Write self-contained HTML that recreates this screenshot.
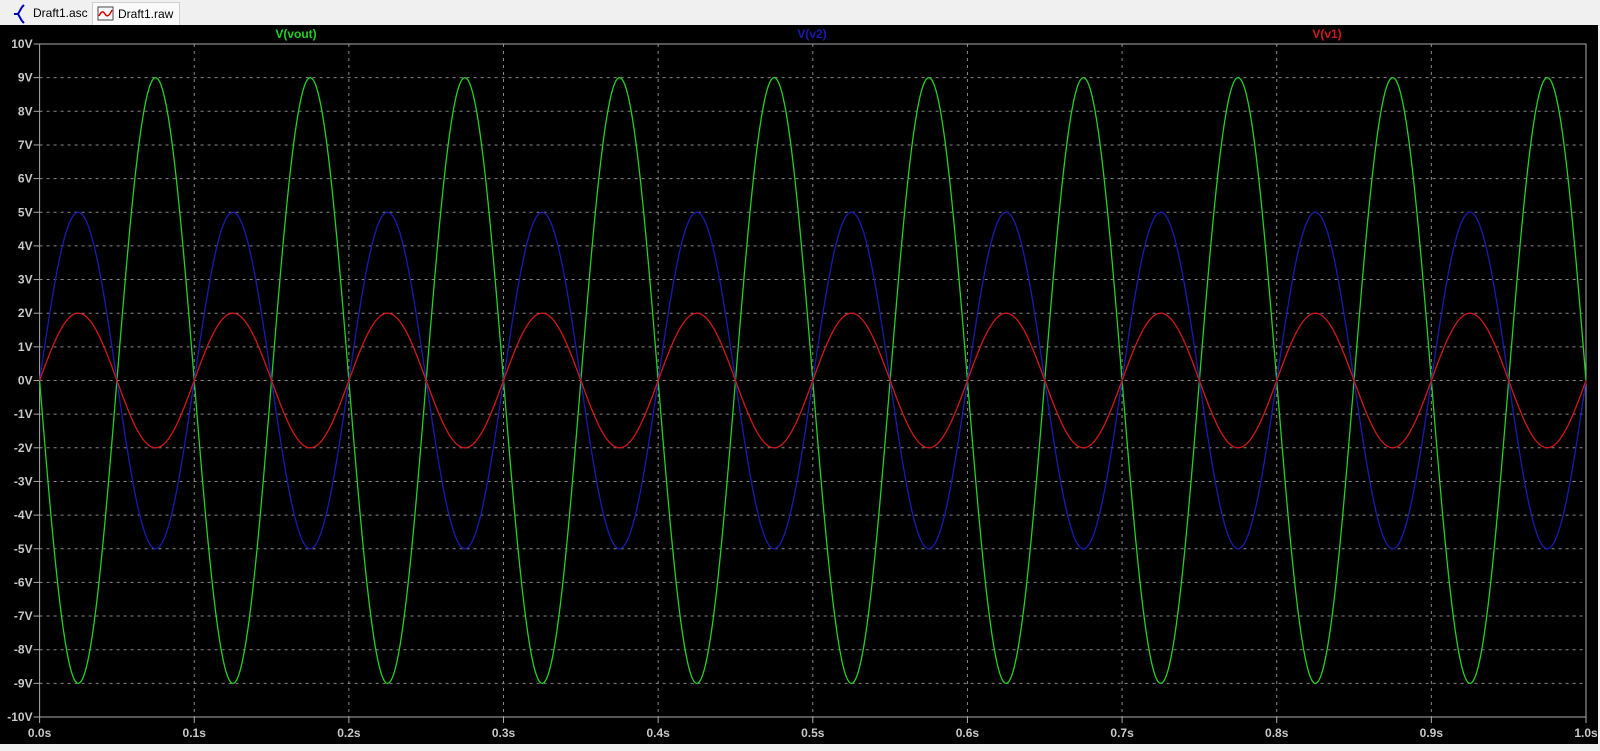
<!DOCTYPE html>
<html><head><meta charset="utf-8"><style>
html,body{margin:0;padding:0;width:1600px;height:751px;overflow:hidden;background:#f0f0f0;font-family:"Liberation Sans",sans-serif}
#tabs{position:absolute;left:0;top:0;width:1600px;height:25px;background:#f0f0f0;border-bottom:1px solid #d8d8d8}
.tab{position:absolute;top:2px;height:22px;font-size:12px;line-height:22px;color:#000}
#plot{position:absolute;left:0;top:25px;width:1598px;height:719px;background:#000}
svg text{font-family:"Liberation Sans",sans-serif;font-weight:bold;font-size:12px}
</style></head><body>
<div id="tabs">
<div class="tab" style="left:4px;width:86px;background:#f0f0f0">
<svg width="20" height="20" style="position:absolute;left:8px;top:2px"><path d="M10 3 L6 10 L10 17 M6 10 L2 10 M10 3 l2 -2 M10 17 l2 2" stroke="#0000c0" stroke-width="2" fill="none"/></svg>
<span style="position:absolute;left:29px">Draft1.asc</span></div>
<div class="tab" style="left:92px;width:86px;background:#fafafa;border:1px solid #d0d0d0;border-bottom:none">
<svg width="18" height="16" style="position:absolute;left:4px;top:3px"><rect x="1" y="1" width="15" height="13" fill="#fff" stroke="#444"/><path d="M2 10 Q5 3 8 8 T15 4" stroke="#d00" stroke-width="1.5" fill="none"/><path d="M1 14 h15" stroke="#444" stroke-dasharray="1 1"/></svg>
<span style="position:absolute;left:25px">Draft1.raw</span></div>
</div>
<div id="plot"></div>
<svg id="s" width="1600" height="751" style="position:absolute;left:0;top:0"></svg>
<script>
var L=39.6,R=1586,T=44,B=717,H='';
function y(v){return T+(10-v)*(B-T)/20}
function x(t){return L+t*(R-L)}
for(var v=-9;v<=9;v++){H+='<line x1="'+L+'" x2="'+R+'" y1="'+y(v)+'" y2="'+y(v)+'" stroke="#888" stroke-dasharray="3 4"/>';}
for(var i=1;i<10;i++){H+='<line y1="'+T+'" y2="'+B+'" x1="'+x(i/10)+'" x2="'+x(i/10)+'" stroke="#888" stroke-dasharray="3 4"/>';}
H+='<rect x="'+L+'" y="'+T+'" width="'+(R-L)+'" height="'+(B-T)+'" fill="none" stroke="#aaa"/>';
for(var v=-10;v<=10;v++){H+='<line x1="'+(L-6)+'" x2="'+L+'" y1="'+y(v)+'" y2="'+y(v)+'" stroke="#aaa"/><text x="'+(L-7)+'" y="'+(y(v)+4)+'" fill="#c8c8c8" text-anchor="end">'+v+'V</text>';}
for(var i=0;i<=10;i++){H+='<line y1="'+B+'" y2="'+(B+6)+'" x1="'+x(i/10)+'" x2="'+x(i/10)+'" stroke="#aaa"/><text x="'+x(i/10)+'" y="'+(B+20)+'" fill="#c8c8c8" text-anchor="middle">'+(i/10).toFixed(1)+'s</text>';}
function tr(a,c){var p='';for(var k=0;k<=3000;k++){var t=k/3000;p+=(k?'L':'M')+x(t).toFixed(2)+' '+y(a*Math.sin(20*Math.PI*t)).toFixed(2);}return '<path d="'+p+'" stroke="'+c+'" stroke-width="1.3" fill="none"/>';}
H+=tr(-9,'#22d022')+tr(5,'#1a1ab0')+tr(2,'#d01818');
H+='<text x="296" y="38" fill="#22d022" text-anchor="middle">V(vout)</text><text x="812" y="38" fill="#1a1ab0" text-anchor="middle">V(v2)</text><text x="1327" y="38" fill="#d01818" text-anchor="middle">V(v1)</text>';
document.getElementById('s').innerHTML=H;
</script>
</body></html>
